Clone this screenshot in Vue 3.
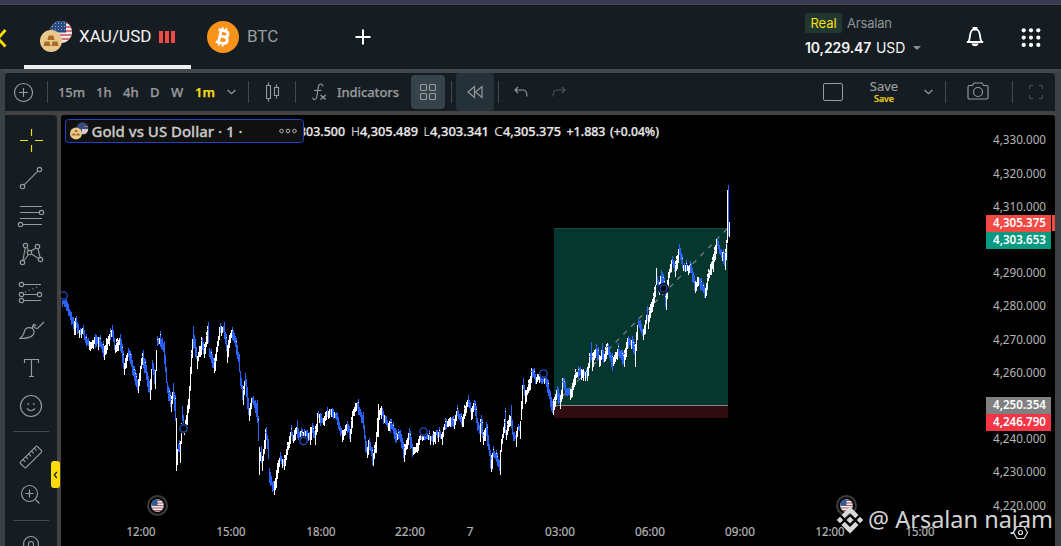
<script setup>
const points = [
  62,300, 66,305, 69,312, 73,323, 74,331, 76,322, 79,333, 83,330, 85,340, 91,346, 95,340, 100,343, 104,353, 107,342,
  112,332, 115,348, 120,340, 124,367, 128,354, 131,361, 134,375, 138,387, 141,364, 143,358, 146,373, 150,391, 152,365,
  155,380, 157,343, 160,340, 164,351, 167,387, 171,406, 173,390, 175,410, 176,464, 178,447, 180,450, 182,415, 184,430,
  187,415, 189,397, 191,363, 193,336, 195,347, 197,360, 202,343, 204,353, 208,330, 209,352, 214,367, 217,347, 220,328,
  224,330, 227,353, 231,333, 235,342, 239,363, 240,377, 243,397, 245,380, 247,397, 249,413, 252,400, 257,410, 258,430,
  259,456, 261,453, 262,463, 265,440, 266,433, 268,450, 269,475, 272,485, 274,490, 277,470, 280,458, 284,465, 287,450,
  291,433, 293,438, 297,428, 299,437, 306,433, 310,438, 312,430, 315,437, 318,415, 323,422, 327,413, 332,412, 337,418,
  339,428, 343,435, 347,425, 350,435, 353,413, 357,405, 360,413, 363,422, 365,442, 367,453, 369,443, 373,460, 376,442,
  378,413, 381,410, 384,418, 388,425, 392,427, 396,438, 400,435, 404,453, 409,435, 413,452, 417,447, 420,437, 428,437,
  433,440, 436,433, 442,437, 444,427, 450,421, 454,425, 457,413, 462,422, 465,410, 468,400, 471,412, 474,405, 477,423,
  480,432, 481,422, 483,440, 486,428, 489,450, 491,466, 493,453, 497,460, 500,468, 501,445, 503,433, 505,422, 506,435,
  509,420, 511,419, 513,437, 516,437, 518,427, 520,430, 521,410, 523,384, 525,397, 529,385, 532,372, 536,380, 539,375,
  542,380, 546,380, 549,393, 553,411, 557,390, 560,403, 563,382, 566,393, 571,393, 576,374, 580,373, 587,375, 590,357,
  592,362, 596,350, 600,361, 602,350, 604,358, 608,348, 612,363, 618,352, 624,361, 627,341, 632,343, 635,354, 638,322,
  643,335, 647,314, 648,323, 650,310, 654,297, 657,280, 659,288, 661,275, 663,283, 666,298, 669,273, 672,260, 675,271,
  679,251, 683,268, 691,268, 695,288, 698,280, 705,293, 708,277, 713,262, 717,242, 720,252, 725,260, 727,242
]

// Long single-candle wicks: column -> [high, low]
const spikes = {
  176: [418, 471], 208: [322, 343], 193: [326, 349], 224: [322, 339], 259: [447, 475], 378: [404, 437],
  310: [427, 445], 511: [405, 428], 500: [450, 475], 591: [342, 360], 656: [268, 285], 665: [293, 307],
  612: [353, 371], 553: [399, 415], 679: [244, 255], 717: [238, 246], 74: [321, 335], 491: [455, 472]
}

function buildCandles() {
  const list = []
  let seg = 0
  let seed = 41
  for (let x = 62; x < 727; x++) {
    while (seg + 4 < points.length && points[seg + 2] <= x) seg += 2
    const span = points[seg + 2] - points[seg]
    const slope = (points[seg + 3] - points[seg + 1]) / span
    const mid = points[seg + 1] + slope * (x - points[seg])
    seed = (seed * 16807) % 2147483647
    const a = (seed >> 4) % 100 / 100
    seed = (seed * 16807) % 2147483647
    const b = (seed >> 4) % 100 / 100
    const reach = 2 + Math.min(Math.abs(slope), 14) * 0.5
    const top = spikes[x] ? spikes[x][0] : Math.round(mid - reach - a * a * 6)
    const low = spikes[x] ? spikes[x][1] : Math.round(mid + reach + b * b * 6)
    const down = slope * 0.22 + a - b * 0.7 > 0.15
    list.push({ x, y: top, h: low - top, c: down ? '#2962ff' : '#ffffff' })
    if (a > 0.8) list.push({ x, y: top + 3, h: 1, c: down ? '#ffffff' : '#2962ff' })
  }
  list.push({ x: 727, y: 190, h: 53, c: '#ffffff' })
  list.push({ x: 728, y: 185, h: 51, c: '#2962ff' })
  list.push({ x: 729, y: 222, h: 15, c: '#ffffff' })
  return list
}
const candles = buildCandles()

const prices = [
  ['4,330.000', 140], ['4,320.000', 174], ['4,310.000', 207], ['4,290.000', 273], ['4,280.000', 306],
  ['4,270.000', 340], ['4,260.000', 373], ['4,240.000', 439], ['4,230.000', 472], ['4,220.000', 506]
]
const tags = [
  ['4,305.375', 215, 17, '#f04a43'], ['4,303.653', 232, 17, '#089981'],
  ['4,250.354', 397, 17, '#808080'], ['4,246.790', 414, 17, '#f23645']
]
const times = [
  ['12:00', 141, 29], ['15:00', 231, 29], ['18:00', 321, 29], ['22:00', 410, 30], ['7', 470, 7],
  ['03:00', 560, 30], ['06:00', 650, 30], ['09:00', 740, 30], ['12:00', 830, 29], ['15:00', 920, 29]
]
const knots = [[63.5, 295.5], [183.5, 428.5], [303.5, 441], [423.5, 431.5], [543.5, 373.5]]
const ohlc = [
  ['303.500', 299, 46], ['H', 351, 9], ['4,305.489', 360, 58], ['L', 423.5, 6], ['4,303.341', 430, 59],
  ['C', 494, 9], ['4,305.375', 503, 58], ['+1.883', 566.5, 39], ['(+0.04%)', 610, 49]
]
</script>

<template>
  <div class="app">
    <header class="top">
      <svg class="back" width="8" height="24" viewBox="0 0 8 24"><path d="M5.500 3 -2 11.500 5.500 19.500" /></svg>
      <div class="tab active">
        <svg class="pair" width="34" height="34" viewBox="0 0 34 34">
          <defs><clipPath id="flagclip"><circle cx="22" cy="12" r="11" /></clipPath></defs>
          <g clip-path="url(#flagclip)">
            <rect x="10" width="24" height="24" fill="#efe9ea" />
            <path d="M10 3H34M10 7H34M10 11H34M10 15H34M10 19H34" stroke="#c94b51" stroke-width="1.700" />
            <rect x="10" y="0" width="17" height="12.500" fill="#294a83" />
            <path d="M13 3.500H26M13 6.500H26M13 9.500H26" stroke="#8fa5c8" stroke-width="1" stroke-dasharray="1 2" />
          </g>
          <circle cx="12" cy="21" r="11" fill="#e8c88c" />
          <path d="M9.600 15.500h4.800l1.100 4.500h-7zM5.600 21.500h4.800l1.100 4.500h-7zM13.600 21.500h4.800l1.100 4.500h-7z" fill="#a86b26" />
        </svg>
        <span class="tab-name">XAU/USD</span>
        <span class="bars"><i /><i /><i /></span>
      </div>
      <div class="tab btc">
        <svg width="32" height="32" viewBox="0 0 32 32">
          <circle cx="16" cy="16" r="16" fill="#f7931a" />
          <g transform="rotate(13 16 16)" fill="none" stroke="#fff">
            <path d="M12.700 9.500V22.500M10 9.800H17C21.300 9.800 21.300 15.500 17 15.500H13M17 15.500C22.300 15.500 22.300 22.200 17 22.200H10" stroke-width="2.700" />
            <path d="M13.700 6.500V10M17.500 6.500V10M13.700 22V25.500M17.500 22V25.500" stroke-width="1.900" />
          </g>
        </svg>
        <span class="tab-name">BTC</span>
      </div>
      <svg class="add" width="16" height="16" viewBox="0 0 16 16"><path d="M8 .5V15.500M.5 8H15.500" /></svg>
      <div class="account">
        <div class="who"><span class="real">Real</span><span class="name">Arsalan</span></div>
        <div class="balance"><b>10,229.47</b><span>USD</span><i class="caret" /></div>
      </div>
      <svg class="bell" width="20" height="22" viewBox="0 0 20 22">
        <path d="M1.800 16H18.200M3.600 15.500C5.600 13 4 5 8 3.500H12C16 5 14.400 13 16.400 15.500M8.500 3V1.800H11.500V3" fill="none" stroke="#fff" stroke-width="1.800" />
        <path d="M6.500 17.500H13.500C13 21 7 21 6.500 17.500Z" fill="#fff" />
      </svg>
      <svg class="dots" width="20" height="20" viewBox="0 0 20 20">
        <template v-for="r in 3" :key="r"><circle v-for="c in 3" :key="c" :cx="c * 7.300 - 4.600" :cy="r * 7.300 - 5" r="2.100" fill="#fff" /></template>
      </svg>
    </header>

    <div class="frame">
      <nav class="toolbar">
        <svg class="plus" width="20" height="20" viewBox="0 0 20 20"><circle cx="10.500" cy="10.500" r="9" /><path d="M10.500 6V15M6 10.500H15" /></svg>
        <i class="sep s1" />
        <span class="t m15">15m</span><span class="t h1">1h</span><span class="t h4">4h</span><span class="t day">D</span><span class="t week">W</span><span class="t now">1m</span>
        <svg class="chev" width="9" height="6" viewBox="0 0 9 6"><path d="M.6 1 4.500 4.600 8.400 1" /></svg>
        <i class="sep s2" />
        <svg class="candle" width="14" height="20" viewBox="0 0 14 20"><path d="M2.500.5V3.500M.5 3.500H4.500V16.500H.5ZM2.500 16.500V19.500M10.500 2.500V5.500M8.500 5.500H12.500V13.500H8.500ZM10.500 13.500V16.500" /></svg>
        <i class="sep s3" />
        <svg class="fx" width="15" height="18" viewBox="0 0 15 18"><path d="M11 3.500C11 .5 7.500 0 6.500 3L4.800 14C4.400 17 1 17.500.8 14.500M2 7.500H9.500M8.500 12 13.800 16.500M13.800 12 8.500 16.500" /></svg>
        <span class="t ind">Indicators</span>
        <span class="layout"><svg width="18" height="18" viewBox="0 0 18 18"><rect x="1.500" y="1.500" width="6" height="6" rx="1" /><rect x="10.500" y="1.500" width="6" height="6" rx="1" /><rect x="1.500" y="10.500" width="6" height="6" rx="1" /><rect x="10.500" y="10.500" width="6" height="6" rx="1" /></svg></span>
        <i class="sep s4" />
        <span class="replay"><svg width="16" height="14" viewBox="0 0 16 14"><path d="M7.500 1.500V12.500L1 7ZM15 1.500V12.500L8.500 7Z" /></svg></span>
        <i class="sep s5" />
        <svg class="undo" width="14" height="12" viewBox="0 0 14 12"><path d="M4 1 1 4 4 7M1 4H9C12 4 13 6.500 13 10.500" /></svg>
        <svg class="redo" width="14" height="12" viewBox="0 0 14 12"><path d="M10 1 13 4 10 7M13 4H5C2 4 1 6.500 1 10.500" /></svg>
        <i class="box" />
        <span class="save"><span>Save</span><small>Save</small></span>
        <svg class="chev save-chev" width="9" height="6" viewBox="0 0 9 6"><path d="M.6 1 4.500 4.600 8.400 1" /></svg>
        <i class="sep s6" />
        <svg class="camera" width="22" height="18" viewBox="0 0 22 18"><path d="M7 1H15L16.500 3.500H19.500Q21 3.500 21 5V15.500Q21 17 19.500 17H2.500Q1 17 1 15.500V5Q1 3.500 2.500 3.500H5.500Z" /><circle cx="11" cy="10" r="4.500" /></svg>
        <i class="sep s7" />
        <svg class="full" width="14" height="14" viewBox="0 0 14 14"><path d="M.5 4V2Q.5.5 2 .5H4M10 .5H12Q13.500.5 13.500 2V4M13.500 10V12Q13.500 13.500 12 13.500H10M4 13.500H2Q.5 13.500.5 12V10" /></svg>
      </nav>

      <div class="work">
        <aside class="tools">
          <svg width="52" height="431" viewBox="5 115 52 431">
            <path d="M31.500 129V136M31.500 145V152M20 140.500H28M35 140.500H43" stroke="#fcdb0f" />
            <g><circle cx="22.500" cy="186.500" r="2.200" /><circle cx="39.500" cy="169.500" r="2.200" /><path d="M24.200 184.800 37.800 171.200" /></g>
            <g><path d="M20 206.500H42M20 212.500H39M20 218.500H42M23 224.500H42" /><circle cx="41.500" cy="212.500" r="2.200" /><circle cx="20.500" cy="224.500" r="2.200" /></g>
            <g><circle cx="25.500" cy="245.500" r="2.200" /><circle cx="37.500" cy="246.500" r="2.200" /><circle cx="29.500" cy="252.500" r="2.200" /><circle cx="22.500" cy="262.500" r="2.200" /><circle cx="40.500" cy="259.500" r="2.200" /><path d="M25.200 248 23 260M26.700 247.500 28.500 250.500M36 248 31 251M38 249 40 257M31.500 254 38.500 258.500M28.500 254.500 24 260.500" /></g>
            <g><circle cx="21.500" cy="284.500" r="2.200" /><path d="M24 284.500H41M24 294.500H37M24 300.500H41" /><circle cx="21.500" cy="294.500" r="2.200" /><circle cx="39.500" cy="294.500" r="2.200" /><circle cx="21.500" cy="300.500" r="2.200" /><path d="M25 292 40 286" stroke-dasharray="1 3" /></g>
            <path d="M20 338.500Q24 335 24.500 331C26 326 33 327 34 331C34.500 336 30 338.500 20 338.500ZM32.500 328.500C32.500 323.500 35 323.500 36 326M33.500 325Q34 328.500 37.500 328.500L44 322" />
            <path d="M24.500 363V359.500H38.500V363M31.500 359.500V376.500M29 376.500H34" />
            <g><circle cx="31" cy="406" r="10.500" /><path d="M27 408.500Q31 413 35 408.500" /><path d="M27.500 404H29M33 404H34.500" stroke-width="1.700" /></g>
            <path d="M13 431.500H49M13 520.500H49" stroke="#42484c" />
            <g transform="rotate(-45 31 457)"><rect x="19" y="453" width="24" height="8" rx="1.200" /><path d="M23.500 453V456.500M27.500 453V456.500M31.500 453V456.500M35.500 453V456.500M39.500 453V456.500" /></g>
            <g><circle cx="29.500" cy="493.500" r="8" /><path d="M35.500 499.500 39.500 503.500M25.500 493.500H33.500M29.500 489.500V497.500" /></g>
            <g><circle cx="31" cy="544" r="7.500" /><path d="M28.500 548V544Q28.500 541.500 31 541.500T33.500 544V548" /></g>
          </svg>
          <span class="collapse"><svg width="5" height="8" viewBox="0 0 5 8"><path d="M3.800 1 1.300 4 3.800 7" /></svg></span>
        </aside>

        <main class="chart">
          <svg width="994" height="431" viewBox="61 115 994 431">
            <g shape-rendering="crispEdges">
              <rect x="554" y="228" width="174" height="177" fill="#05372f" />
              <rect x="554" y="228" width="174" height="1" fill="#11483e" />
              <rect x="554" y="405" width="174" height="13" fill="#300b10" />
              <rect x="554" y="405" width="174" height="1" fill="#858888" />
            </g>
            <path d="M554 405 728 228" fill="none" stroke="#7d8481" stroke-width="1.200" stroke-dasharray="5 6" />
            <g shape-rendering="crispEdges"><rect v-for="(c, i) in candles" :key="i" :x="c.x" :y="c.y" width="1" :height="c.h" :fill="c.c" /></g>
            <g v-for="k in knots" :key="k[0]"><circle :cx="k[0]" :cy="k[1]" r="5" fill="#000" /><circle :cx="k[0]" :cy="k[1]" r="3.700" fill="#000" stroke="#1e4fc9" stroke-width="1.300" /></g>
            <circle cx="663.500" cy="288.500" r="5.500" fill="#04070d" />
            <circle cx="663.500" cy="288.500" r="3.500" fill="#02050a" stroke="#1e4bc0" stroke-width="1.200" />

            <g v-for="cx in [157.5, 846.5]" :key="cx">
              <circle :cx="cx" cy="505.500" r="9.500" fill="#08090a" stroke="#3a3b3c" stroke-width="2" />
              <svg :x="cx - 6.5" y="499" width="13" height="13" viewBox="0 0 14 14">
                <circle cx="7" cy="7" r="6.800" fill="#eee" />
                <path d="M6 1.500H11M6 4.200H13.500M1 7H13.700M1 9.700H13M3 12.400H11" stroke="#a8565c" stroke-width="1.100" />
                <path d="M7 .2A6.800 6.800 0 0 0 .2 7H7Z" fill="#285c9d" />
              </svg>
            </g>

            <g class="axis"><text v-for="p in prices" :key="p[0]" x="993" :y="p[1] + 4.300" textLength="53" lengthAdjust="spacingAndGlyphs">{{ p[0] }}</text></g>
            <g class="tags"><template v-for="t in tags" :key="t[0]"><rect x="986" :y="t[1]" width="65" :height="t[2]" :fill="t[3]" /><text x="993" :y="t[1] + 12" textLength="53" lengthAdjust="spacingAndGlyphs">{{ t[0] }}</text></template></g>
            <rect x="1052" y="215" width="3" height="16" fill="#f04a43" />
            <g class="axis mid"><text v-for="t in times" :key="t[1]" :x="t[1]" y="536" :textLength="t[2]" lengthAdjust="spacingAndGlyphs">{{ t[0] }}</text></g>
            <g class="quote"><text v-for="o in ohlc" :key="o[1]" :x="o[1]" y="136" :class="{ key: o[0].length === 1 }" :textLength="o[2]" lengthAdjust="spacingAndGlyphs">{{ o[0] }}</text></g>

            <rect x="65.500" y="119.500" width="238" height="23" rx="3" fill="#101010" stroke="#1848c9" />
            <circle cx="82.500" cy="128" r="5.800" fill="#344c7d" /><path d="M82 129H88.200C88 133 85 135 82 134Z" fill="#dbc9cb" /><path d="M84 126.500H88" stroke="#bb6369" />
            <circle cx="76" cy="133.500" r="6" fill="#e8c88c" /><path d="M75 130h2l.6 2h-3.200zM72.600 133.500h2.500l.6 2h-3.600zM76.800 133.500h2.500l.6 2h-3.600z" fill="#a86b26" />
            <text class="symbol" x="91.500" y="137" textLength="151" lengthAdjust="spacingAndGlyphs">Gold vs US Dollar · 1 ·</text>
            <g fill="none" stroke="#b4b4b4"><circle cx="281.500" cy="131" r="1.800" /><circle cx="288" cy="131" r="1.800" /><circle cx="294.500" cy="131" r="1.800" /></g>

            <g fill="#d8d8d8">
              <path d="M850 506.500 858.500 515 855.300 518.200 850 512.900 844.700 518.200 841.500 515Z" />
              <path d="M850 533.500 858.500 525 855.300 521.800 850 527.100 844.700 521.800 841.500 525Z" />
              <path d="M850 516.500 853.500 520 850 523.500 846.500 520ZM840 516.800 843.200 520 840 523.200 836.800 520ZM860 516.800 863.200 520 860 523.200 856.800 520Z" />
            </g>
            <text class="mark" x="868" y="528" textLength="185" lengthAdjust="spacingAndGlyphs">@ Arsalan najam</text>
            <path d="M1017 526.500H1024L1027.500 532.500 1024 538.500H1017L1013.500 532.500Z" fill="#000" stroke="#dedede" stroke-width="1.200" /><circle cx="1020.500" cy="532.500" r="2" fill="none" stroke="#dedede" stroke-width="1.200" />
          </svg>
        </main>
      </div>
    </div>
  </div>
</template>

<style>
body { overflow: hidden; background: #161d22; }
</style>
<style scoped>
* { box-sizing: border-box; }
svg { display: block; flex: none; }
.app { width: 1061px; height: 546px; background: #161d22; overflow: hidden; font-family: "Noto Sans", "Open Sans", sans-serif; }
.top { height: 69px; border-top: 4px solid #3b3b52; display: flex; align-items: center; box-shadow: inset 0 1px #45484b; }
.back { margin-top: 4px; fill: none; stroke: #ffde02; stroke-width: 2.800; }
.tab { height: 65px; display: flex; align-items: center; font-family: Roboto, "Liberation Sans", sans-serif; font-size: 17px; color: #9a9da0; }
.active { width: 167px; margin-left: 16px; border-bottom: 4px solid #eceeef; padding-left: 15px; padding-top: 3px; color: #f1f2f2; }
.active .tab-name { margin-left: 6px; width: 74px; letter-spacing: .1px; }
.pair { margin-top: 1px; }
.bars { display: flex; gap: 2px; margin-left: 6px; margin-top: 2px; }
.bars i { width: 4px; height: 12px; background: #f04a43; }
.btc { margin-left: 16px; width: 72px; }
.btc .tab-name { margin-left: 8px; margin-top: -1px; }
.add { margin-left: 76px; margin-top: 1px; stroke: #fff; stroke-width: 2; }
.account { width: 150px; margin-left: 434px; font-family: Inter, Roboto, sans-serif; height: 47px; }
.who { display: flex; height: 20px; align-items: center; font-size: 13px; color: #8e9295; }
.real { background: #20382f; color: #fcdf0d; width: 37px; height: 20px; line-height: 20px; border-radius: 2px; text-align: center; letter-spacing: -.1px; }
.name { margin-left: 5px; letter-spacing: -.2px; }
.balance { display: flex; align-items: center; font-size: 14px; color: #f4f4f4; height: 29px; }
.balance b { font-weight: 600; width: 71px; letter-spacing: -.1px; }
.balance span { letter-spacing: -.1px; }
.caret { border: 4.500px solid transparent; border-top-color: #8d9194; border-bottom: 0; margin-left: 8px; }
.bell { margin-left: 10px; margin-top: 1px; }
.dots { margin-left: 36px; margin-top: 2px; }
.frame { height: 477px; border-top: 4px solid #42494c; border-left: 5px solid #3a4246; border-right: 6px solid #3a4246; background: #434141; }
.toolbar { width: 1050px; height: 38px; display: flex; align-items: center; background: #161d22; border-radius: 3px 3px 0 0; }
.toolbar svg { fill: none; stroke: #989b9d; stroke-width: 1.150; }
.sep { width: 1px; height: 22px; background: #42484b; flex: none; }
.t { font-size: 13px; font-weight: 500; color: #96999b; line-height: 20px; flex: none; white-space: nowrap; -webkit-text-stroke: .25px currentColor; }
.plus { margin-left: 8px; }
.s1 { margin-left: 14px; }
.m15 { margin-left: 10px; width: 38px; letter-spacing: -.1px; }
.h1 { width: 27px; }
.h4 { width: 27px; }
.day { width: 21px; }
.week { width: 24px; }
.now { width: 32px; color: #f5da18; font-weight: 600; }
.s2 { margin-left: 12px; }
.candle { margin-left: 17px; }
.s3 { margin-left: 15px; }
.fx { margin-left: 16px; }
.ind { margin-left: 10px; width: 74px; letter-spacing: -.1px; }
.layout { width: 34px; height: 34px; background: #36434a; border-radius: 4px; display: flex; align-items: center; justify-content: center; }
.s4 { margin-left: 6px; }
.replay { margin-left: 4px; width: 38px; height: 38px; background: #253139; border-radius: 3px; display: flex; align-items: center; justify-content: center; }
.s5 { margin-left: 4px; }
.undo { margin-left: 15px; }
.toolbar .redo { margin-left: 24px; stroke: #4c5256; }
.box { width: 20px; height: 18px; border: 1px solid #989b9d; border-radius: 2px; margin-left: 257px; flex: none; }
.save { width: 40px; margin-left: 21px; display: flex; flex-direction: column; align-items: center; font-size: 13px; line-height: 15px; color: #989b9d; -webkit-text-stroke: .2px currentColor; padding-bottom: 1px; }
.save small { font-size: 9px; line-height: 10px; color: #f5da18; font-weight: 500; }
.save-chev { margin-left: 20px; }
.s6 { margin-left: 12px; }
.camera { margin-left: 21px; margin-top: -2px; }
.s7 { margin-left: 23px; }
.toolbar .full { margin-left: 16px; stroke: #4c5256; }
.work { display: flex; height: 431px; margin-top: 4px; gap: 4px; width: 1050px; }
.tools { position: relative; width: 52px; background: #161d22; border-radius: 0 4px 0 0; }
.tools > svg { fill: none; stroke: #969a9c; stroke-width: 1.150; }
.collapse { position: absolute; left: 46px; top: 346px; width: 9px; height: 27px; background: #fbdc0b; border-radius: 3px; display: flex; align-items: center; justify-content: center; }
.collapse svg { fill: none; stroke: #161d22; stroke-width: 1.200; }
.chart { width: 994px; background: #000; border-radius: 3px 3px 0 0; overflow: hidden; }
.axis { font-size: 12px; fill: #b5b5b5; }
.mid { text-anchor: middle; stroke: #b5b5b5; stroke-width: .2px; }
.tags { font-size: 12px; font-weight: 600; fill: #fff; }
.quote { font-size: 12px; font-weight: 500; fill: #e8e8e8; stroke: #e8e8e8; stroke-width: .25px; }
.quote .key { fill: #cfcfcf; font-weight: 400; stroke: none; }
.symbol { font-size: 15px; font-weight: 500; fill: #c8c8c8; stroke: #c8c8c8; stroke-width: .3px; }
.mark { font-size: 23px; fill: #d4d4d4; }
</style>
